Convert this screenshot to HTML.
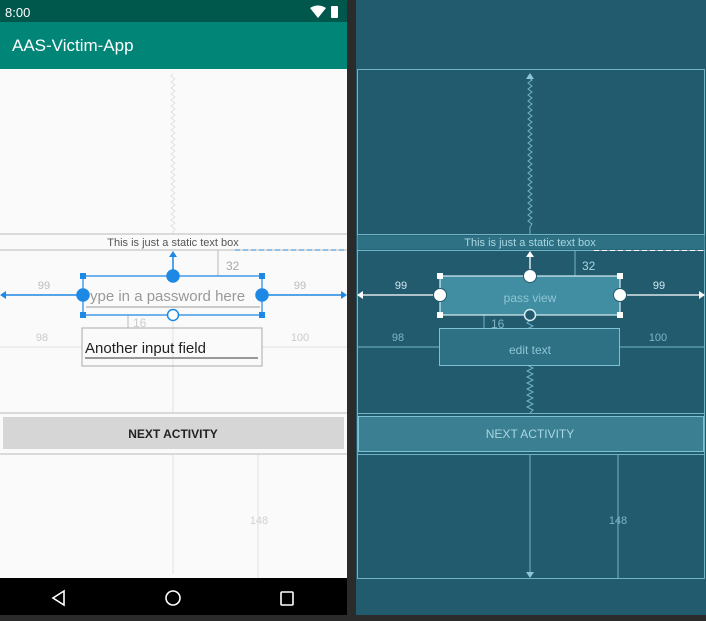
<!DOCTYPE html>
<html><head><meta charset="utf-8"><style>
*{margin:0;padding:0;box-sizing:border-box}
body{width:706px;height:621px;overflow:hidden;background:#2b2b2b;font-family:"Liberation Sans",sans-serif;position:relative}
.a{position:absolute}
</style></head><body>
<div class="a" style="left:0;top:0;width:347px;height:22px;background:#00574b"></div>
<div class="a" style="left:5px;top:5px;color:#fff;font-size:13px">8:00</div>
<svg class="a" style="left:308px;top:5px" width="36" height="14"><path d="M2 3 Q10 -2 18 3 L10 13 Z" fill="#fff"/><rect x="23" y="1" width="7" height="12" rx="1" fill="#fff"/></svg>
<div class="a" style="left:0;top:22px;width:347px;height:47px;background:#008577"></div>
<div class="a" style="left:12px;top:36px;color:#fff;font-size:17px">AAS-Victim-App</div>
<div class="a" style="left:0;top:69px;width:347px;height:509px;background:#fafafa"></div>
<div class="a" style="left:0;top:578px;width:347px;height:37px;background:#000"></div>
<div class="a" style="left:0;top:615px;width:706px;height:6px;background:#2b2b2b"></div>
<svg class="a" style="left:0;top:69px" width="347" height="509">
 <g stroke="#e2e2e2" fill="none">
  <path d="M173 4 l-2 3 l4 3 l-4 3 l4 3 l-4 3 l4 3 l-4 3 l4 3 l-4 3 l4 3 l-4 3 l4 3 l-4 3 l4 3 l-4 3 l4 3 l-4 3 l4 3 l-4 3 l4 3 l-4 3 l4 3 l-4 3 l4 3 l-4 3 l4 3 l-4 3 l4 3 l-4 3 l4 3 l-4 3 l4 3 l-4 3 l4 3 l-4 3 l4 3 l-4 3 l4 3 l-4 3 l4 3 l-4 3 l4 3 l-4 3 l4 3 l-4 3 l4 3 l-4 3 l4 3 l-4 3 l4 3 l-4 3 l4 3 l-2 3 V165"/>
  <path d="M173 247 V344 M173 386 V505 M258 385 V509 M0 278 H82 M262 278 H347"/>
 </g>
 <text x="42" y="272" font-size="11" fill="#ccc" text-anchor="middle">98</text>
 <text x="300" y="272" font-size="11" fill="#ccc" text-anchor="middle">100</text>
 <text x="259" y="455" font-size="11" fill="#d0d0d0" text-anchor="middle">148</text>
 <path d="M0 165 H347 M0 181 H347 M0 344 H347 M0 385 H347" stroke="#bbb"/>
 <path d="M235 181 H347" stroke="#1e88e5" stroke-dasharray="5 3"/>
 <path d="M218 181 V207 M128 246 V259" stroke="#bbb"/>
 <text x="226" y="201" font-size="12" fill="#aaa">32</text>
 <text x="133" y="258" font-size="12" fill="#ccc">16</text>
 <text x="173" y="177" font-size="11" fill="#555" text-anchor="middle">This is just a static text box</text>
 <rect x="82" y="259" width="180" height="38" fill="none" stroke="#aaa"/>
 <text x="85" y="284" font-size="15" fill="#222">Another input field</text>
 <path d="M85 289 H258" stroke="#999" stroke-width="2"/>
 <rect x="3" y="348" width="341" height="32" fill="#d6d6d6"/>
 <text x="173" y="369" font-size="12" font-weight="bold" fill="#222" text-anchor="middle">NEXT ACTIVITY</text>
 <text x="90" y="232" font-size="15" fill="#999">ype in a password here</text>
 <path d="M86 238 H260" stroke="#999"/>
 <g stroke="#1e88e5" stroke-width="1.5" fill="#1e88e5">
  <path d="M83 207 H262 M83 246 H262 M83 207 V246 M262 207 V246" fill="none" stroke-width="1.2"/>
  <path d="M173 207 V186 M2 226 H83 M262 226 H345" fill="none"/>
  <path d="M173 182 l-4 6 h8z M0 226 l6 -4 v8z M347 226 l-6 -4 v8z" stroke="none"/>
  <rect x="80" y="204" width="6" height="6" stroke="none"/><rect x="259" y="204" width="6" height="6" stroke="none"/>
  <rect x="80" y="243" width="6" height="6" stroke="none"/><rect x="259" y="243" width="6" height="6" stroke="none"/>
  <circle cx="173" cy="207" r="6"/><circle cx="83" cy="226" r="6"/><circle cx="262" cy="226" r="6"/>
  <circle cx="173" cy="246" r="5.5" fill="#fff"/>
 </g>
 <text x="44" y="220" font-size="11" fill="#bbb" text-anchor="middle">99</text>
 <text x="300" y="220" font-size="11" fill="#bbb" text-anchor="middle">99</text>
</svg>
<svg class="a" style="left:0;top:578px" width="347" height="37">
 <path d="M64 13 L53 20 L64 27 Z" fill="none" stroke="#fff" stroke-width="1.6"/>
 <circle cx="173" cy="20" r="7" fill="none" stroke="#fff" stroke-width="1.6"/>
 <rect x="281" y="14" width="12" height="13" rx="1" fill="none" stroke="#fff" stroke-width="1.6"/>
</svg>
<div class="a" style="left:356px;top:0;width:350px;height:615px;background:#235b6e"></div>
<svg class="a" style="left:356px;top:0" width="350" height="615">
 <g fill="none" stroke="#6fb3c6">
  <rect x="1.5" y="69.5" width="347" height="509"/>
  <path d="M1 234.5 H349 M1 250.5 H349 M1 413.5 H349 M1 454.5 H349"/>
  <path d="M174 74 l-2 3 l4 3 l-4 3 l4 3 l-4 3 l4 3 l-4 3 l4 3 l-4 3 l4 3 l-4 3 l4 3 l-4 3 l4 3 l-4 3 l4 3 l-4 3 l4 3 l-4 3 l4 3 l-4 3 l4 3 l-4 3 l4 3 l-4 3 l4 3 l-4 3 l4 3 l-4 3 l4 3 l-4 3 l4 3 l-4 3 l4 3 l-4 3 l4 3 l-4 3 l4 3 l-4 3 l4 3 l-4 3 l4 3 l-4 3 l4 3 l-4 3 l4 3 l-4 3 l4 3 l-4 3 l4 3 l-2 3 V234"/>
  <path d="M174 455 V575 M262 455 V578 M219 250 V276 M128 315 V328 M2 347 H83 M263 347 H348"/>
  <path d="M174 320 l-3 3 l6 3 l-6 3 l6 3 l-6 3 l6 3 l-6 3 l6 3 l-6 3 l6 3 l-6 3 l6 3 l-6 3 l6 3 l-6 3 l6 3 l-6 3 l6 3 l-6 3 l6 3 l-6 3 l6 3 l-6 3 l6 3 l-6 3 l6 3 l-6 3 l6 3 l-6 3 l6 3 l-3 3 V413"/>
 </g>
 <rect x="2.5" y="416.5" width="345" height="35" fill="#3b7f92" stroke="#7cc2d4"/>
 <rect x="1.5" y="235.5" width="347" height="14" fill="#2f7184"/>
 <text x="174" y="246" font-size="11" fill="#a9d6e2" text-anchor="middle">This is just a static text box</text>
 <path d="M238 250.5 H349" stroke="#fff" stroke-dasharray="5 3"/>
 <text x="226" y="270" font-size="12" fill="#a9d6e2">32</text>
 <text x="135" y="328" font-size="12" fill="#7fb4c4">16</text>
 <text x="42" y="341" font-size="11" fill="#7fb4c4" text-anchor="middle">98</text>
 <text x="302" y="341" font-size="11" fill="#7fb4c4" text-anchor="middle">100</text>
 <text x="262" y="524" font-size="11" fill="#7fb4c4" text-anchor="middle">148</text>
 <rect x="83.5" y="328.5" width="180" height="37" fill="#2e7084" stroke="#7cc2d4"/>
 <text x="174" y="354" font-size="12" fill="#8fc6d5" text-anchor="middle">edit text</text>
 <text x="174" y="438" font-size="12" fill="#a9d6e2" text-anchor="middle">NEXT ACTIVITY</text>
 <rect x="84" y="276" width="180" height="39" fill="#418da2" stroke="#d8eef4" stroke-width="1.2"/>
 <text x="174" y="302" font-size="12" fill="#8fc6d5" text-anchor="middle">pass view</text>
 <g fill="#fff" stroke="#fff">
  <path d="M174 276 V256 M2 295 H84 M264 295 H348" fill="none" stroke-width="1.3"/>
  <path d="M174 251 l-4 6 h8z M1 295 l6 -4 v8z M349 295 l-6 -4 v8z" stroke="none"/>
  <rect x="81" y="273" width="6" height="6" stroke="none"/><rect x="261" y="273" width="6" height="6" stroke="none"/>
  <rect x="81" y="312" width="6" height="6" stroke="none"/><rect x="261" y="312" width="6" height="6" stroke="none"/>
  <circle cx="174" cy="276" r="6.5" stroke="#235b6e"/><circle cx="84" cy="295" r="6.5" stroke="#235b6e"/><circle cx="264" cy="295" r="6.5" stroke="#235b6e"/>
  <circle cx="174" cy="315" r="5.5" fill="#235b6e" stroke="#d8eef4" stroke-width="1.5"/>
 </g>
 <text x="45" y="289" font-size="11" fill="#cfe8ef" text-anchor="middle">99</text>
 <text x="303" y="289" font-size="11" fill="#cfe8ef" text-anchor="middle">99</text>
 <path d="M174 73 l-4 6 h8z M174 578 l-4 -6 h8z" fill="#8fc6d5"/>
</svg>
</body></html>
